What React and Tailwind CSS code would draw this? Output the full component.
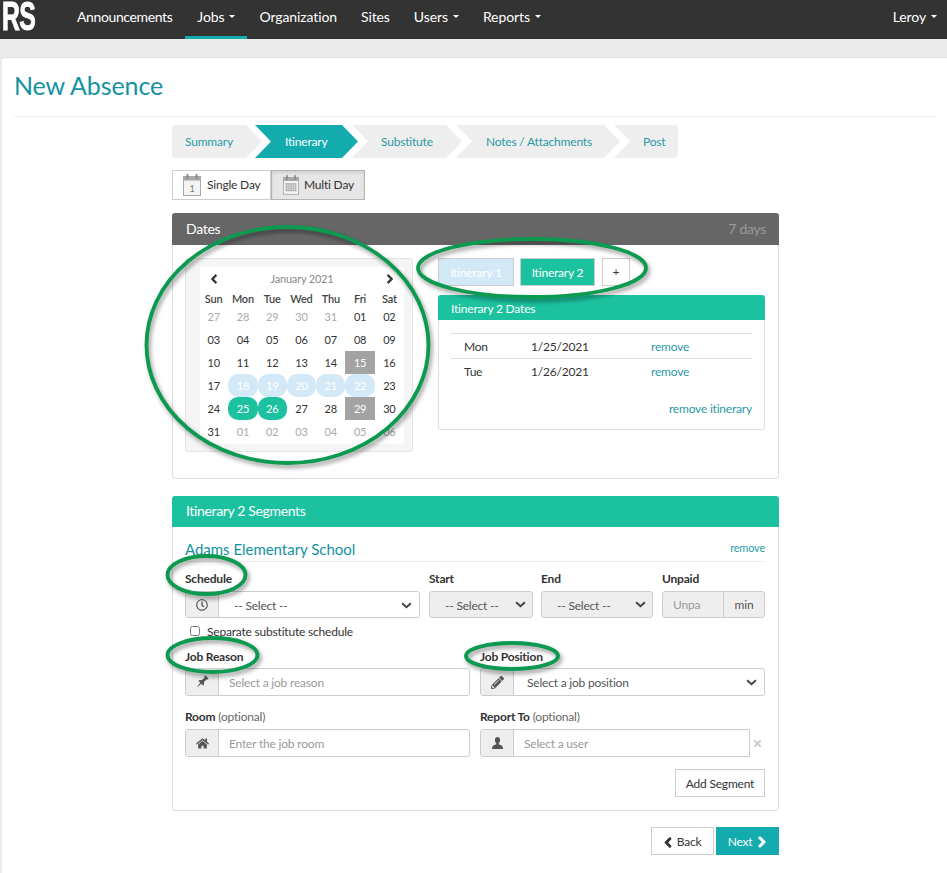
import { FaChevronLeft, FaChevronRight, FaHome, FaPencilAlt, FaRegClock, FaTimes } from 'react-icons/fa'

const navItems = [
  { name: 'Announcements', tight: true },
  { name: 'Jobs', caret: true, active: true },
  { name: 'Organization' },
  { name: 'Sites' },
  { name: 'Users', caret: true },
  { name: 'Reports', caret: true },
]

const days = ['Sun', 'Mon', 'Tue', 'Wed', 'Thu', 'Fri', 'Sat']

const calendar = [
  ['27', '28', '29', '30', '31', '01', '02'],
  ['03', '04', '05', '06', '07', '08', '09'],
  ['10', '11', '12', '13', '14', '15', '16'],
  ['17', '18', '19', '20', '21', '22', '23'],
  ['24', '25', '26', '27', '28', '29', '30'],
  ['31', '01', '02', '03', '04', '05', '06'],
]

const cellClass = (row, col) => {
  const value = calendar[row][col]
  if ((row === 0 && col < 5) || (row === 5 && col > 0)) return 'text-[#aaaaaa]'
  if (row === 2 && col === 5) return 'bg-[#a3a3a3] text-white'
  if (row === 4 && col === 5) return 'bg-[#a3a3a3] text-white'
  if (row === 3 && col >= 1 && col <= 5) return 'bg-[#d4e9f7] text-white rounded-[10px]'
  if (row === 4 && (value === '25' || value === '26')) return 'bg-[#1cc29f] text-white rounded-[10px]'
  return 'text-[#333333]'
}

const Caret = () => (
  <span className="ml-[5px] inline-block w-0 h-0 align-middle border-x-[3.5px] border-x-transparent border-t-[3.5px] border-t-white" />
)

const Label = ({ children, optional }) => (
  <label className="block text-[12px] leading-[16px] font-bold text-[#333333] mb-[4px]">
    {children}
    {optional && <span className="font-normal text-[#666666]"> (optional)</span>}
  </label>
)

const Addon = ({ children }) => (
  <span className="w-[33px] shrink-0 flex items-center justify-center bg-[#eeeeee] border-r border-[#cccccc] text-[#555555] text-[13px]">
    {children}
  </span>
)

const Chevron = () => (
  <svg viewBox="0 0 12 8" className="absolute right-[7px] top-[10px] w-[11px] h-[7px] pointer-events-none" fill="none" stroke="#444444" strokeWidth="2.2">
    <path d="M1 1.5l5 4.5 5-4.5" />
  </svg>
)

const UserIcon = () => (
  <svg viewBox="0 0 12 13" className="w-[11px] h-[12px]" fill="#555555">
    <path d="M6 0C4.2 0 3.2 1.3 3.2 3.2c0 1.5.6 2.8 1.4 3.5v1.2C3.2 8.6 0.6 9.2 0.3 10.6L0 13h12l-.3-2.4C11.4 9.2 8.8 8.6 7.4 7.9V6.7c.8-.7 1.4-2 1.4-3.5C8.8 1.3 7.8 0 6 0z" />
  </svg>
)

const PinIcon = () => (
  <svg viewBox="0 0 14 14" className="w-[14px] h-[14px]" fill="#555555">
    <path transform="rotate(45 7 7)" d="M4.6 0h4.8v1l-1 .6v4l2 2.2v1H7.7L7 15l-.7-6.2H3.6v-1l2-2.2v-4l-1-.6z" />
  </svg>
)

const SelectBox = ({ disabled, className }) => (
  <div className={`relative ${className}`}>
    <div className={`h-[27px] px-[15px] flex items-center text-[12px] text-[#555555] ${disabled ? 'pt-[2px] bg-[#eeeeee] border border-[#cccccc] rounded-[3px]' : 'pt-[1px]'}`}>
      -- Select --
    </div>
    <Chevron />
  </div>
)

const CalendarIcon = ({ multi }) => (
  <svg viewBox="0 0 18 22" className={multi ? 'w-[16px] h-[20px]' : 'w-[18px] h-[22px]'}>
    <rect x="0.5" y="2.5" width="17" height="19" fill="#f4f4f4" stroke="#a8a8a8" />
    <rect x="0.5" y="2.5" width="17" height="4" fill="#a8a8a8" />
    <rect x="3.5" y="0" width="2" height="5" fill="#8c8c8c" />
    <rect x="12.5" y="0" width="2" height="5" fill="#8c8c8c" />
    {multi ? (
      <>
        <path d="M3 9h12v9H3z" fill="#9a9a9a" />
        <path d="M5.5 9v9M8 9v9M10.5 9v9M13 9v9M3 11.2h12M3 13.5h12M3 15.8h12" stroke="#f4f4f4" strokeWidth="0.7" />
      </>
    ) : (
      <text x="9" y="18" textAnchor="middle" fontSize="9" fill="#777777" fontFamily="Lato">1</text>
    )}
  </svg>
)

const Step = ({ name, className, clip }) => (
  <div className={`h-[33px] shrink-0 flex items-center text-[12px] ${className} ${clip}`}>{name}</div>
)

export default function App() {
  return (
    <div className="relative min-h-screen overflow-hidden bg-[#ebebeb] font-['Lato',sans-serif] text-[12px] tracking-[-0.2px] text-[#333333]">
      {/* Top nav */}
      <nav className="h-[39px] bg-[#333333] flex items-stretch text-white text-[14px] tracking-[-0.1px]">
        <div className="w-[65px] pl-[2px] flex items-start">
          <span className="font-['Liberation_Sans',sans-serif] font-bold text-[40px] leading-[33px] scale-x-[0.62] origin-left tracking-[-1px] [-webkit-text-stroke:1px_white]">RS</span>
        </div>
        {navItems.map((item) => (
          <a
            key={item.name}
            className={`pl-[12px] flex items-center ${item.active ? 'pr-[12px] border-b-[3px] border-[#14abaf] pb-[4px]' : 'pb-[7px]'} ${item.tight ? 'pr-[13px] tracking-[-0.38px]' : 'pr-[12px]'}`}
          >
            {item.name}
            {item.caret && <Caret />}
          </a>
        ))}
        <a className="ml-auto pr-[10px] pb-[7px] flex items-center">
          Leroy
          <Caret />
        </a>
      </nav>

      {/* Page card */}
      <main className="mt-[18px] ml-[2px] h-[816px] bg-white border-t border-[#dddddd] rounded-tl-[3px] pl-[12px] pr-[10px]">
        <h1 className="pt-[10px] pb-[14px] text-[25px] tracking-[-0.1px] leading-[34px] text-[#14929f] border-b border-[#eeeeee]">New Absence</h1>

        <div className="w-[607px] ml-[158px] mt-[8px]">
          {/* Wizard steps */}
          <div className="flex">
            <Step name="Summary" className="w-[90px] pl-[13px] bg-[#eeeeee] text-[#2b9aa6] rounded-l-[4px]" clip="[clip-path:polygon(0_0,74px_0,100%_50%,74px_100%,0_100%)]" />
            <Step name="Itinerary" className="w-[103px] -ml-[7px] pl-[30px] bg-[#14abaf] text-white" clip="[clip-path:polygon(0_0,87px_0,100%_50%,87px_100%,0_100%,16px_50%)]" />
            <Step name="Substitute" className="w-[110px] -ml-[6px] pl-[29px] bg-[#eeeeee] text-[#2b9aa6]" clip="[clip-path:polygon(0_0,94px_0,100%_50%,94px_100%,0_100%,16px_50%)]" />
            <Step name="Notes / Attachments" className="w-[164px] -ml-[6px] pl-[30px] bg-[#eeeeee] text-[#2b9aa6]" clip="[clip-path:polygon(0_0,148px_0,100%_50%,148px_100%,0_100%,16px_50%)]" />
            <Step name="Post" className="w-[64px] -ml-[6px] pl-[29px] bg-[#eeeeee] text-[#2b9aa6] rounded-r-[4px]" clip="[clip-path:polygon(0_0,100%_0,100%_100%,0_100%,16px_50%)]" />
          </div>

          {/* Single / multi day toggle */}
          <div className="flex mt-[12px] h-[30px]">
            <button className="w-[99px] flex items-center pl-[10px] gap-[6px] border border-[#cccccc] bg-white text-[#333333]">
              <CalendarIcon />
              Single Day
            </button>
            <button className="w-[94px] flex items-center pl-[11px] gap-[5px] border border-[#b5b5b5] bg-[#e6e6e6] text-[#333333] shadow-[inset_0_2px_3px_rgba(0,0,0,0.1)]">
              <CalendarIcon multi />
              Multi Day
            </button>
          </div>

          {/* Dates panel */}
          <section className="mt-[13px] h-[266px] border border-[#dddddd] rounded-[3px]">
            <header className="h-[32px] -mx-px -mt-px bg-[#666666] rounded-t-[3px] pl-[14px] pr-[13px] pb-[1px] flex items-center justify-between text-[14px] tracking-[-0.3px] text-white">
              <span>Dates</span>
              <span className="text-[#999999]">7 days</span>
            </header>
            <div className="flex pt-[13px] pl-[12px]">
              <div className="w-[228px] h-[194px] bg-[#f5f5f5] border border-[#e3e3e3] rounded-[3px] pt-[8px] pl-[14px]">
                <div className="w-[204px] h-[177px] bg-white text-[12px] leading-[23px]">
                  <div className="h-[23px] flex items-center justify-between px-[10px] text-[#333333]">
                    <FaChevronLeft className="w-[8px] h-[10px] [stroke-width:50]" />
                    <span className="text-[11px] text-[#888888]">January 2021</span>
                    <FaChevronRight className="w-[8px] h-[10px] [stroke-width:50]" />
                  </div>
                  <div className="grid grid-cols-7 -ml-px text-center">
                    {days.map((d) => (
                      <div key={d} className="h-[15px] leading-[18px] text-[11px] font-semibold text-[#444444]">{d}</div>
                    ))}
                  </div>
                  <div className="grid grid-cols-7 -ml-px text-center text-[11px]">
                    {calendar.map((week, row) =>
                      week.map((value, col) => (
                        <div key={`${row}-${col}`} className={`h-[23px] ${cellClass(row, col)}`}>{value}</div>
                      )),
                    )}
                  </div>
                </div>
              </div>

              <div className="ml-[25px] w-[327px]">
                <div className="flex h-[28px] text-[12px]">
                  <span className="w-[76px] pt-[1px] flex items-center justify-center bg-[#d4e9f7] border border-[#cccccc] text-white">Itinerary 1</span>
                  <span className="ml-[6px] w-[75px] pt-[1px] flex items-center justify-center bg-[#1cc29f] border border-[#cccccc] text-white">Itinerary 2</span>
                  <span className="ml-[7px] w-[28px] flex items-center justify-center border border-[#cccccc] bg-white">+</span>
                </div>
                <div className="mt-[9px] h-[135px] border border-[#dddddd] rounded-[3px]">
                  <div className="h-[25px] pt-[2px] -mx-px -mt-px rounded-t-[3px] bg-[#1cc29f] text-white px-[13px] flex items-center text-[12px]">
                    Itinerary 2 Dates
                  </div>
                  <div className="mx-[12px] mt-[13px] border-t border-[#dddddd]">
                    <div className="h-[25px] pt-[1px] flex items-center border-b border-[#dddddd] pl-[13px]">
                      <span className="w-[67px]">Mon</span>
                      <span className="w-[120px]">1/25/2021</span>
                      <a className="text-[#2b9aa6]">remove</a>
                    </div>
                    <div className="h-[25px] flex items-center pl-[13px]">
                      <span className="w-[67px]">Tue</span>
                      <span className="w-[120px]">1/26/2021</span>
                      <a className="text-[#2b9aa6]">remove</a>
                    </div>
                  </div>
                  <div className="mt-[16px] pr-[12px] text-right text-[#2b9aa6]">remove itinerary</div>
                </div>
              </div>
            </div>
          </section>

          {/* Segments panel */}
          <section className="mt-[17px] h-[315px] border border-[#dddddd] rounded-[3px] pl-[12px] pr-[13px]">
            <header className="h-[31px] -ml-[13px] -mr-[14px] -mt-px bg-[#1cc29f] rounded-t-[3px] px-[14px] pb-[3px] flex items-center text-[14px] tracking-[-0.35px] text-white">
              Itinerary 2 Segments
            </header>
            <div className="mt-[12px] h-[23px] flex items-end justify-between border-b border-[#eeeeee] leading-none">
              <span className="text-[15px] tracking-[-0.02px] text-[#14929f] pb-[4px]">Adams Elementary School</span>
              <a className="text-[11px] text-[#2b9aa6] pb-[8px]">remove</a>
            </div>

            <div className="flex mt-[9px]">
              <div className="w-[235px] shrink-0">
                <Label>Schedule</Label>
                <div className="flex h-[27px] border border-[#cccccc] rounded-[3px] overflow-hidden relative">
                  <Addon><FaRegClock className="text-[12px]" /></Addon>
                  <SelectBox className="flex-1" />
                </div>
              </div>
              <div className="ml-[9px] w-[104px] shrink-0">
                <Label>Start</Label>
                <SelectBox disabled />
              </div>
              <div className="ml-[8px] w-[112px] shrink-0">
                <Label>End</Label>
                <SelectBox disabled />
              </div>
              <div className="ml-[9px] w-[103px] shrink-0">
                <Label>Unpaid</Label>
                <div className="flex h-[27px] border border-[#cccccc] rounded-[3px] bg-[#eeeeee] overflow-hidden">
                  <span className="flex-1 pl-[10px] pt-[1px] flex items-center text-[#999999]">Unpa</span>
                  <span className="w-[41px] flex items-center justify-center border-l border-[#cccccc] text-[#555555]">min</span>
                </div>
              </div>
            </div>

            <label className="flex items-center mt-[6px] ml-[5px] h-[14px] gap-[6px] leading-none">
              <input type="checkbox" className="w-[10px] h-[10px]" />
              <span className="ml-[1px] pt-[2px]">Separate substitute schedule</span>
            </label>

            <div className="grid grid-cols-2 gap-x-[10px] mt-[11px]">
              <div>
                <Label>Job Reason</Label>
                <div className="flex h-[28px] -mt-px border border-[#cccccc] rounded-[3px] overflow-hidden">
                  <Addon><PinIcon /></Addon>
                  <input placeholder="Select a job reason" className="flex-1 min-w-0 pl-[10px] pt-[2px] outline-none placeholder:text-[#999999]" />
                </div>
              </div>
              <div>
                <Label>Job Position</Label>
                <div className="relative flex h-[28px] -mt-px border border-[#cccccc] rounded-[3px] overflow-hidden">
                  <Addon><FaPencilAlt /></Addon>
                  <span className="flex-1 pl-[13px] pt-[2px] flex items-center text-[#555555]">Select a job position</span>
                  <Chevron />
                </div>
              </div>
            </div>

            <div className="grid grid-cols-2 gap-x-[10px] mt-[13px]">
              <div>
                <Label optional>Room</Label>
                <div className="flex h-[28px] border border-[#cccccc] rounded-[3px] overflow-hidden">
                  <Addon><FaHome className="text-[13px]" /></Addon>
                  <input placeholder="Enter the job room" className="flex-1 min-w-0 pl-[10px] pt-[2px] outline-none placeholder:text-[#999999]" />
                </div>
              </div>
              <div>
                <Label optional>Report To</Label>
                <div className="flex items-center">
                  <div className="flex flex-1 h-[28px] border border-[#cccccc] rounded-l-[3px] overflow-hidden">
                    <Addon><UserIcon /></Addon>
                    <input placeholder="Select a user" className="flex-1 min-w-0 pl-[10px] pt-[2px] outline-none placeholder:text-[#999999]" />
                  </div>
                  <FaTimes className="w-[15px] text-[#cccccc] text-[11px] shrink-0" />
                </div>
              </div>
            </div>

            <div className="flex justify-end mt-[12px]">
              <button className="w-[90px] h-[28px] pt-[2px] border border-[#cccccc] bg-white text-[#333333]">Add Segment</button>
            </div>
          </section>

          {/* Pager */}
          <div className="flex justify-end mt-[16px] gap-[2px]">
            <button className="w-[63px] h-[28px] pt-[2px] border border-[#cccccc] bg-white flex items-center justify-center gap-[5px]">
              <FaChevronLeft className="w-[8px] h-[11px] [stroke-width:50]" />
              Back
            </button>
            <button className="w-[63px] h-[28px] pt-[2px] bg-[#14abaf] text-white flex items-center justify-center gap-[5px]">
              Next
              <FaChevronRight className="w-[10px] h-[12px] [stroke-width:50]" />
            </button>
          </div>
        </div>
      </main>

      {/* Hand-drawn annotation rings on top of the screenshot */}
      <svg className="absolute left-0 top-0 w-[947px] h-[873px] pointer-events-none" viewBox="0 0 947 873" fill="none" stroke="#0b9a50" strokeWidth="3.8">
        <g className="[filter:drop-shadow(2px_3px_2px_rgba(0,0,0,0.4))]">
          <ellipse cx="287.5" cy="345" rx="141" ry="118" />
          <ellipse cx="532" cy="268" rx="114" ry="29" />
          <ellipse cx="206.5" cy="575" rx="39" ry="19" />
          <ellipse cx="212.5" cy="655" rx="45" ry="17" />
          <ellipse cx="512" cy="656" rx="46" ry="13" />
        </g>
      </svg>
    </div>
  )
}
